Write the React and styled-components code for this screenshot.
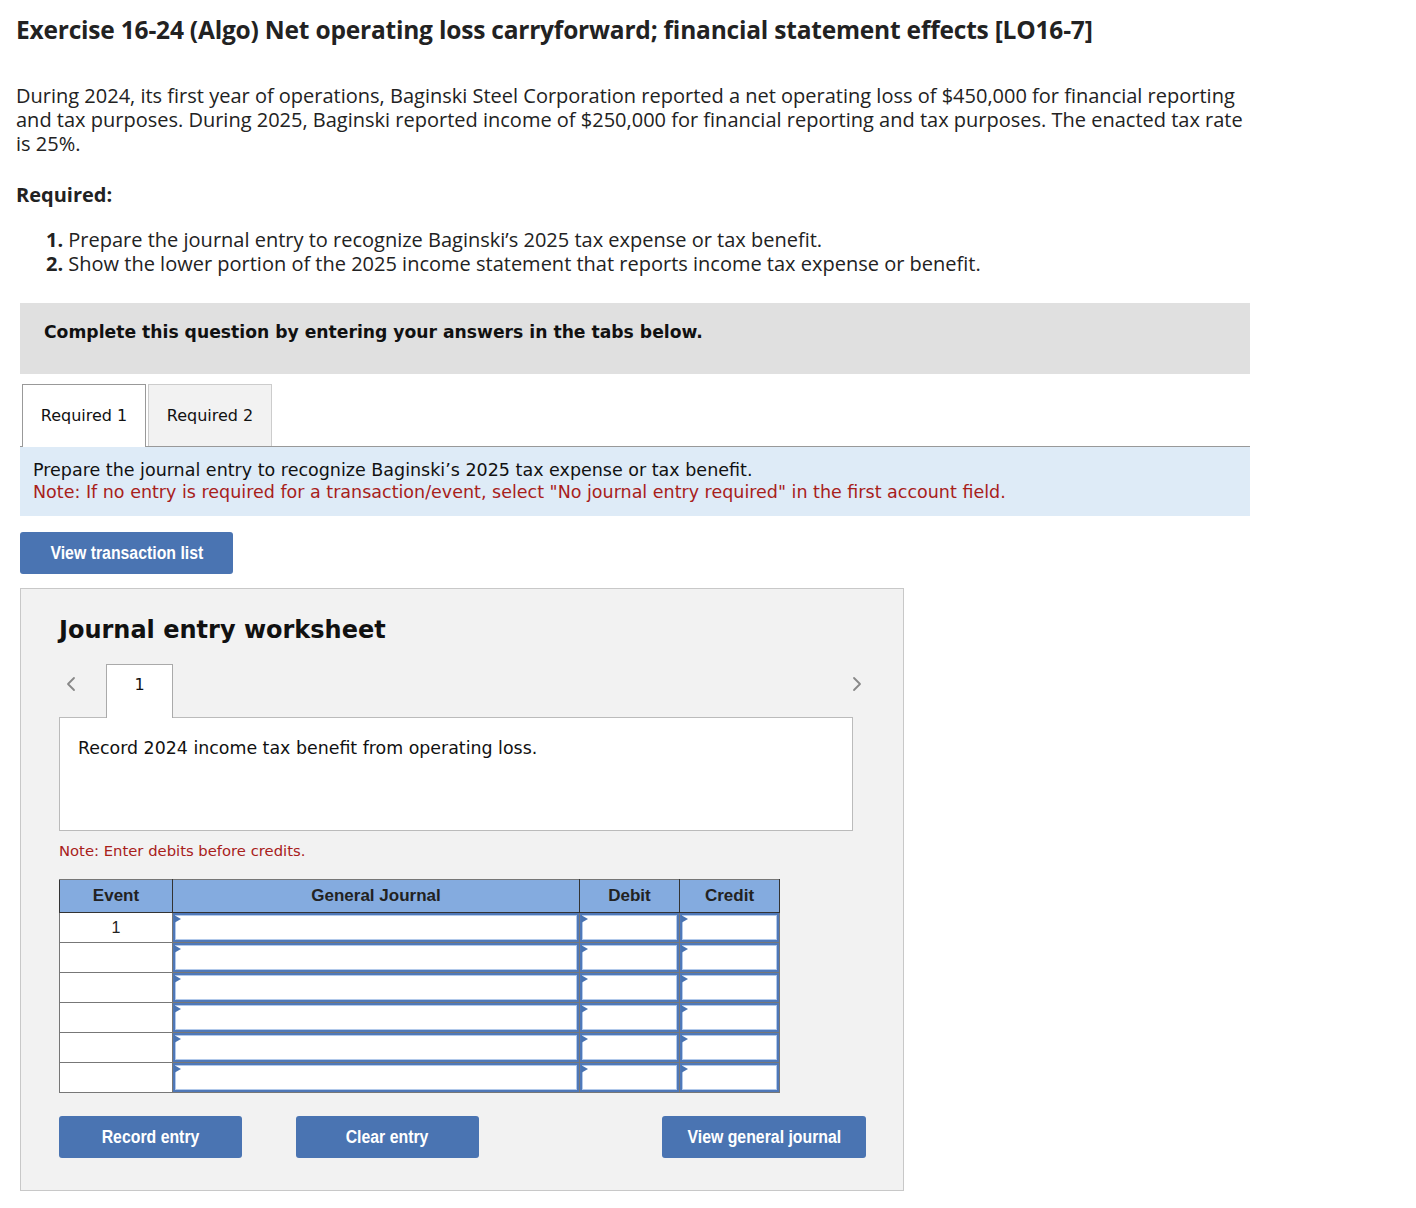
import React from 'react'
import styled, { createGlobalStyle } from 'styled-components'
import { ChevronLeft, ChevronRight } from 'lucide-react'

const GlobalStyle = createGlobalStyle`
   body {
      margin: 0;
      background: #fff;
      color: #222;
      font-family: "Open Sans", "Liberation Sans", Arial, sans-serif;
   }
`

const rows = [1, 2, 3, 4, 5, 6]

const App = () => {
   return (
      <Page>
         <GlobalStyle />
         <Title>Exercise 16-24 (Algo) Net operating loss carryforward; financial statement effects [LO16-7]</Title>
         <Intro>
            During 2024, its first year of operations, Baginski Steel Corporation reported a net operating loss of $450,000 for financial reporting
            <br />
            and tax purposes. During 2025, Baginski reported income of $250,000 for financial reporting and tax purposes. The enacted tax rate
            <br />
            is 25%.
         </Intro>
         <Required>Required:</Required>
         <List>
            <li><b>1.</b> Prepare the journal entry to recognize Baginski’s 2025 tax expense or tax benefit.</li>
            <li><b>2.</b> Show the lower portion of the 2025 income statement that reports income tax expense or benefit.</li>
         </List>

         <Banner>Complete this question by entering your answers in the tabs below.</Banner>

         <Tabs>
            <Tab active>Required 1</Tab>
            <Tab>Required 2</Tab>
         </Tabs>

         <Info>
            Prepare the journal entry to recognize Baginski’s 2025 tax expense or tax benefit.
            <Red>Note: If no entry is required for a transaction/event, select "No journal entry required" in the first account field.</Red>
         </Info>

         <TopActions>
            <BlueButton width={213}><Label>View transaction list</Label></BlueButton>
         </TopActions>

         <Worksheet>
            <WsTitle>Journal entry worksheet</WsTitle>
            <Nav>
               <Arrow><ChevronLeft size={24} strokeWidth={1.8} /></Arrow>
               <EntryTab>1</EntryTab>
               <Spacer />
               <Arrow><ChevronRight size={24} strokeWidth={1.8} /></Arrow>
            </Nav>
            <EntryBox>Record 2024 income tax benefit from operating loss.</EntryBox>
            <SmallNote>Note: Enter debits before credits.</SmallNote>

            <Table>
               <colgroup>
                  <col style={{ width: 113 }} />
                  <col style={{ width: 407 }} />
                  <col style={{ width: 100 }} />
                  <col style={{ width: 100 }} />
               </colgroup>
               <thead>
                  <tr>
                     <Th>Event</Th>
                     <Th>General Journal</Th>
                     <Th>Debit</Th>
                     <Th>Credit</Th>
                  </tr>
               </thead>
               <tbody>
                  {rows.map((r) => (
                     <tr key={r}>
                        <EventCell>{r === 1 ? '1' : ''}</EventCell>
                        <InputCell><Field /></InputCell>
                        <InputCell><Field /></InputCell>
                        <InputCell><Field /></InputCell>
                     </tr>
                  ))}
               </tbody>
            </Table>

            <Actions>
               <BlueButton width={183}><Label>Record entry</Label></BlueButton>
               <BlueButton width={183}><Label>Clear entry</Label></BlueButton>
               <Spacer />
               <BlueButton width={204}><Label>View general journal</Label></BlueButton>
            </Actions>
         </Worksheet>
      </Page>
   )
}

const Page = styled.div`
   padding: 15px 0 40px 16px;
   width: 1250px;
`

const Title = styled.h1`
   margin: 0;
   font-size: 24.5px;
   line-height: 30px;
   font-weight: bold;
   color: #222;
   letter-spacing: -0.2px;
`

const Intro = styled.p`
   margin: 39px 0 0;
   white-space: nowrap;
   font-size: 20px;
   line-height: 24px;
   color: #222;
`

const Required = styled.div`
   margin-top: 27px;
   font-size: 20px;
   line-height: 24px;
   font-weight: bold;
`

const List = styled.ol`
   list-style: none;
   margin: 21px 0 0;
   padding: 0 0 0 30px;
   font-size: 20px;
   line-height: 24px;

   b {
      font-weight: bold;
   }
`

const Banner = styled.div`
   margin: 27px 0 0 4px;
   width: 1230px;
   height: 71px;
   box-sizing: border-box;
   padding: 18px 24px;
   background: #e0e0e0;
   font-family: "DejaVu Sans", Verdana, sans-serif;
   font-size: 17.2px;
   line-height: 22px;
   font-weight: bold;
   color: #111;
`

const Tabs = styled.div`
   display: flex;
   gap: 2px;
   margin: 10px 0 0 4px;
   width: 1230px;
   border-bottom: 1px solid #999;
   padding-left: 2px;
   box-sizing: border-box;
`

const Tab = styled.div`
   width: 124px;
   box-sizing: border-box;
   display: flex;
   align-items: center;
   justify-content: center;
   border: 1px solid ${(p) => (p.active ? '#999' : '#ccc')};
   border-bottom: none;
   background: ${(p) => (p.active ? '#fff' : '#f2f2f2')};
   font-family: "DejaVu Sans", Verdana, sans-serif;
   font-size: 16px;
   color: #111;
   margin-bottom: ${(p) => (p.active ? '-1px' : '0')};
   height: ${(p) => (p.active ? '63px' : '62px')};
   padding-bottom: ${(p) => (p.active ? '1px' : '0')};
`

const Info = styled.div`
   margin-left: 4px;
   width: 1230px;
   height: 69px;
   box-sizing: border-box;
   padding: 12px 13px;
   background: #deebf7;
   font-family: "DejaVu Sans", Verdana, sans-serif;
   font-size: 17.5px;
   line-height: 22px;
   color: #111;
`

const Red = styled.div`
   color: #a8201a;
`

const TopActions = styled.div`
   display: flex;
   margin: 16px 0 0 4px;
`

const BlueButton = styled.button`
   display: flex;
   align-items: center;
   justify-content: center;
   flex: none;
   width: ${(p) => p.width}px;
   height: 42px;
   margin: 0;
   padding: 0;
   border: none;
   border-radius: 3px;
   background: #4a74b2;
   color: #fff;
   font-family: "Liberation Sans", Arial, sans-serif;
   font-weight: bold;
   font-size: 18px;
   cursor: pointer;
`

const Label = styled.span`
   display: inline-block;
   white-space: nowrap;
   transform: scaleX(0.88);
`

const Worksheet = styled.div`
   margin: 14px 0 0 4px;
   width: 884px;
   box-sizing: border-box;
   padding: 26px 38px 32px;
   background: #f2f2f2;
   border: 1px solid #c8c8c8;
`

const WsTitle = styled.h2`
   margin: 0;
   font-family: "DejaVu Sans", Verdana, sans-serif;
   font-size: 24px;
   line-height: 30px;
   font-weight: bold;
   color: #111;
`

const Nav = styled.div`
   display: flex;
   align-items: flex-end;
   margin-top: 19px;
   width: 810px;
`

const Arrow = styled.div`
   display: flex;
   align-items: center;
   justify-content: center;
   width: 24px;
   height: 26px;
   color: #888;
   align-self: flex-start;
   margin-top: 7px;
`

const EntryTab = styled.div`
   margin-left: 23px;
   width: 67px;
   height: 54px;
   box-sizing: border-box;
   padding-top: 10px;
   text-align: center;
   background: #fff;
   border: 1px solid #aaa;
   border-bottom: none;
   font-family: "DejaVu Sans", Verdana, sans-serif;
   font-size: 16px;
   line-height: 20px;
   color: #111;
   position: relative;
   z-index: 1;
   margin-bottom: -1px;
`

const Spacer = styled.div`
   flex: 1;
`

const EntryBox = styled.div`
   width: 794px;
   height: 114px;
   box-sizing: border-box;
   padding: 19px 18px;
   background: #fff;
   border: 1px solid #bbb;
   font-family: "DejaVu Sans", Verdana, sans-serif;
   font-size: 17.4px;
   line-height: 22px;
   color: #111;
`

const SmallNote = styled.div`
   margin-top: 11px;
   font-family: "DejaVu Sans", Verdana, sans-serif;
   font-size: 14.8px;
   line-height: 18px;
   color: #a8201a;
`

const Table = styled.table`
   margin-top: 19px;
   width: 720px;
   border-collapse: collapse;
   table-layout: fixed;
   background: #fff;
   border: 1px solid #777;
`

const Th = styled.th`
   height: 32px;
   padding: 0;
   background: #84abdf;
   border: 1px solid #333;
   border-top-color: #777;
   font-family: "Liberation Sans", Arial, sans-serif;
   font-size: 17px;
   font-weight: bold;
   color: #222;
   text-align: center;
   vertical-align: middle;
`

const EventCell = styled.td`
   padding: 0;
   border: 1px solid #777;
   text-align: center;
   font-family: "Liberation Sans", Arial, sans-serif;
   font-size: 16px;
   color: #222;
   vertical-align: middle;
`

const InputCell = styled.td`
   padding: 0;
   border: 1px solid #777;
`

const Field = styled.div`
   position: relative;
   height: 29px;
   box-sizing: border-box;
   background: #fff;
   border: 2px solid #4f78b8;
   box-shadow: inset 0 0 0 1px #b2c9ea;

   &::before {
      content: '';
      position: absolute;
      top: 0;
      left: -1px;
      border-top: 4px solid transparent;
      border-bottom: 4px solid transparent;
      border-left: 7px solid #4a74b2;
   }
`

const Actions = styled.div`
   display: flex;
   gap: 54px;
   margin-top: 23px;
   width: 807px;
`

export default App
